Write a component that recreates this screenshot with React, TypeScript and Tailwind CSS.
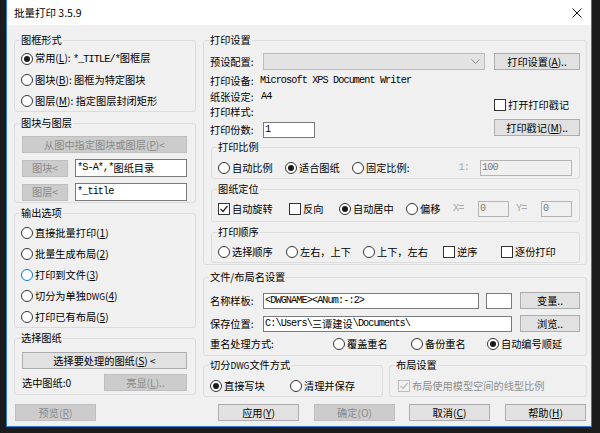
import React from "react";

const CJK = "font-['Noto_Sans_CJK_SC',sans-serif]";
const MONO = "font-['Liberation_Mono',monospace] tracking-[-0.9px]";

function U({ c }: { c: string }) {
  return <span className="underline underline-offset-[1px]">{c}</span>;
}

function M({ children }: { children: React.ReactNode }) {
  return <span className={MONO}>{children}</span>;
}

function Radio({
  checked = false,
  focus = false,
  children,
  className = "",
}: {
  checked?: boolean;
  focus?: boolean;
  children: React.ReactNode;
  className?: string;
}) {
  return (
    <div className={`flex items-center h-full shrink-0 ${className}`}>
      <span
        className={`w-[12px] h-[12px] rounded-full border ${
          focus ? "border-[#0078d7]" : "border-[#333333]"
        } bg-white flex items-center justify-center shrink-0`}
      >
        {checked && <span className="w-[6px] h-[6px] rounded-full bg-[#1a1a1a]" />}
      </span>
      <span className="ml-[2px] whitespace-nowrap">{children}</span>
    </div>
  );
}

function Check({
  checked = false,
  disabled = false,
  children,
  className = "",
}: {
  checked?: boolean;
  disabled?: boolean;
  children: React.ReactNode;
  className?: string;
}) {
  return (
    <div className={`flex items-center h-full shrink-0 ${className}`}>
      <span
        className={`w-[12px] h-[12px] border ${
          disabled ? "border-[#bcbcbc] bg-[#f0f0f0]" : "border-[#333333] bg-white"
        } flex items-center justify-center shrink-0`}
      >
        {checked && (
          <svg width="10" height="10" viewBox="0 0 10 10">
            <polyline
              points="1.5,5 4,7.5 8.5,2"
              fill="none"
              stroke={disabled ? "#bcbcbc" : "#222"}
              strokeWidth="1.2"
            />
          </svg>
        )}
      </span>
      <span className={`ml-[2px] whitespace-nowrap ${disabled ? "text-[#8d8d8d]" : ""}`}>
        {children}
      </span>
    </div>
  );
}

function Btn({
  children,
  disabled = false,
  className = "",
}: {
  children: React.ReactNode;
  disabled?: boolean;
  className?: string;
}) {
  return (
    <div
      className={`h-[17px] flex items-center justify-center border whitespace-nowrap shrink-0 ${
        disabled
          ? "bg-[#cccccc] border-[#bfbfbf] text-[#8a8a8a]"
          : "bg-[#e1e1e1] border-[#adadad] text-black"
      } ${className}`}
    >
      {children}
    </div>
  );
}

function Field({
  children,
  disabled = false,
  className = "",
}: {
  children?: React.ReactNode;
  disabled?: boolean;
  className?: string;
}) {
  return (
    <div
      className={`h-[16px] flex items-center border px-[1px] whitespace-nowrap overflow-hidden shrink-0 ${
        disabled
          ? "bg-[#f0f0f0] border-[#b4b4b4] text-[#7a7a7a]"
          : "bg-white border-[#7a7a7a] text-black"
      } ${className}`}
    >
      {children}
    </div>
  );
}

function Group({
  title,
  className = "",
  children,
}: {
  title: React.ReactNode;
  className?: string;
  children: React.ReactNode;
}) {
  return (
    <fieldset className={`border border-[#dcdcdc] rounded-[3px] min-w-0 ${className}`}>
      <legend className="ml-[5px] px-[1px] leading-[14px]">{title}</legend>
      {children}
    </fieldset>
  );
}

export default function App() {
  return (
    <div
      className={`w-[600px] h-[433px] bg-[#1c1c1c] pl-[6px] pr-[8px] pb-[6px] ${CJK} text-[10.2px] text-black`}
    >
      <div className="h-full flex flex-col border-x border-b border-[#2b7bd3] bg-[#f0f0f0]">
        {/* title bar */}
        <div className="h-[25px] bg-white flex items-center justify-between pl-[7px] pr-[9px] shrink-0">
          <span className="text-[10.5px]">批量打印 3.5.9</span>
          <svg width="10" height="10" viewBox="0 0 10 10">
            <path d="M0.5 0.5 L9.5 9.5 M9.5 0.5 L0.5 9.5" stroke="#111" strokeWidth="1" />
          </svg>
        </div>

        <div className="flex gap-[7px] pl-[7px] pt-[8px]">
          {/* LEFT COLUMN */}
          <div className="w-[182px] flex flex-col shrink-0">
            <Group title="图框形式">
              <div className="pt-[1px] pl-[6px] flex flex-col">
                <div className="h-[21px]">
                  <Radio checked>
                    常用(<U c="L" />): <M>*_TITLE/*</M>图框层
                  </Radio>
                </div>
                <div className="h-[21px]">
                  <Radio>
                    图块(<U c="B" />): 图框为特定图块
                  </Radio>
                </div>
                <div className="h-[21px]">
                  <Radio>
                    图层(<U c="M" />): 指定图层封闭矩形
                  </Radio>
                </div>
              </div>
            </Group>

            <Group title="图块与图层" className="mt-[4px]">
              <div className="pt-[6px] pl-[7px] pr-[8px] pb-[1px] flex flex-col">
                <Btn disabled>
                  从图中指定图块或图层(<U c="P" />)&lt;
                </Btn>
                <div className="mt-[6px] h-[18px] flex items-center">
                  <Btn disabled className="w-[46px]">
                    图块&lt;
                  </Btn>
                  <Field className="ml-[7px] flex-1 h-[18px]">
                    <M>*S-A*,*</M>图纸目录
                  </Field>
                </div>
                <div className="mt-[6px] h-[18px] flex items-center">
                  <Btn disabled className="w-[46px]">
                    图层&lt;
                  </Btn>
                  <Field className="ml-[7px] flex-1 h-[18px]">
                    <M>*_title</M>
                  </Field>
                </div>
              </div>
            </Group>

            <Group title="输出选项" className="mt-[3px]">
              <div className="pt-[2px] pl-[6px] flex flex-col">
                <div className="h-[21px]">
                  <Radio>
                    直接批量打印(<U c="1" />)
                  </Radio>
                </div>
                <div className="h-[21px]">
                  <Radio>
                    批量生成布局(<U c="2" />)
                  </Radio>
                </div>
                <div className="h-[21px]">
                  <Radio focus>
                    打印到文件(<U c="3" />)
                  </Radio>
                </div>
                <div className="h-[21px]">
                  <Radio>
                    切分为单独<span className="text-[8.5px]">DWG</span>(<U c="4" />)
                  </Radio>
                </div>
                <div className="h-[21px]">
                  <Radio>
                    打印已有布局(<U c="5" />)
                  </Radio>
                </div>
              </div>
            </Group>

            <Group title="选择图纸" className="mt-[3px]">
              <div className="pt-[7px] pl-[7px] pr-[8px] pb-[3px] flex flex-col">
                <Btn>
                  选择要处理的图纸(<U c="S" />) &lt;
                </Btn>
                <div className="mt-[5px] h-[17px] flex items-center">
                  <span>选中图纸:0</span>
                  <Btn disabled className="ml-auto w-[83px]">
                    亮显(<U c="L" />)..
                  </Btn>
                </div>
              </div>
            </Group>

            <Btn disabled className="mt-[9px] ml-[1px] w-[81px]">
              预览(<U c="R" />)
            </Btn>
          </div>

          {/* RIGHT COLUMN */}
          <div className="w-[384px] flex flex-col shrink-0">
            <Group title="打印设置">
              <div className="pt-[6px] pl-[6px] pr-[6px] pb-[1px] flex flex-col">
                <div className="h-[17px] flex items-center">
                  <span className="w-[53px] shrink-0">预设配置:</span>
                  <div className="w-[222px] h-[17px] border border-[#bcbcbc] bg-[#e3e3e3] flex items-center justify-end pr-[4px]">
                    <svg width="9" height="5" viewBox="0 0 9 5">
                      <polyline points="0.5,0.5 4.5,4.5 8.5,0.5" fill="none" stroke="#8a8a8a" strokeWidth="1" />
                    </svg>
                  </div>
                  <Btn className="ml-auto w-[86px]">
                    打印设置(<U c="A" />)..
                  </Btn>
                </div>

                <div className="mt-[3px] flex">
                  <div className="flex-1 flex flex-col">
                    <div className="h-[16px] flex items-center">
                      <span className="w-[50px] shrink-0">打印设备:</span>
                      <M>Microsoft XPS Document Writer</M>
                    </div>
                    <div className="h-[15px] flex items-center">
                      <span className="w-[51px] shrink-0">纸张设定:</span>
                      <M>A4</M>
                    </div>
                    <div className="h-[16px] flex items-center">
                      <span>打印样式:</span>
                    </div>
                    <div className="mt-[2px] h-[16px] flex items-center">
                      <span className="w-[53px] shrink-0">打印份数:</span>
                      <Field className="w-[52px]">
                        <M>1</M>
                      </Field>
                    </div>
                  </div>
                  <div className="w-[86px] flex flex-col">
                    <div className="mt-[25px] h-[14px]">
                      <Check>打开打印戳记</Check>
                    </div>
                    <Btn className="mt-[7px] w-[86px]">
                      打印戳记(<U c="M" />)..
                    </Btn>
                  </div>
                </div>

                <Group title="打印比例" className="mt-[2px] ml-[1px]">
                  <div className="pt-[4px] pl-[6px] pr-[7px] h-[24px] flex items-center">
                    <Radio className="w-[67px]">自动比例</Radio>
                    <Radio checked className="w-[67px]">
                      适合图纸
                    </Radio>
                    <Radio>固定比例:</Radio>
                    <span className={`ml-auto text-[#a8a8a8] ${MONO}`}>1:</span>
                    <Field disabled className="ml-[11px] w-[92px]">
                      <M>100</M>
                    </Field>
                  </div>
                </Group>

                <Group title="图纸定位" className="mt-[3px] ml-[1px]">
                  <div className="pt-[2px] pb-[1px] pl-[6px] pr-[7px] h-[25px] flex items-center">
                    <Check checked className="w-[71px]">
                      自动旋转
                    </Check>
                    <Check className="w-[50px]">反向</Check>
                    <Radio checked className="w-[67px]">
                      自动居中
                    </Radio>
                    <Radio className="w-[47px]">偏移</Radio>
                    <span className={`w-[25px] text-[#a8a8a8] ${MONO}`}>X=</span>
                    <Field disabled className="w-[31px]">
                      <M>0</M>
                    </Field>
                    <span className={`ml-[7px] w-[25px] text-[#a8a8a8] ${MONO}`}>Y=</span>
                    <Field disabled className="w-[31px]">
                      <M>0</M>
                    </Field>
                  </div>
                </Group>

                <Group title="打印顺序" className="mt-[3px] ml-[1px]">
                  <div className="pt-[3px] pl-[6px] pr-[7px] h-[23px] flex items-center">
                    <Radio className="w-[68px]">选择顺序</Radio>
                    <Radio className="w-[77px]">左右，上下</Radio>
                    <Radio className="w-[80px]">上下，左右</Radio>
                    <Check className="w-[58px]">逆序</Check>
                    <Check>逐份打印</Check>
                  </div>
                </Group>
              </div>
            </Group>

            <Group title="文件/布局名设置" className="mt-[5px]">
              <div className="pt-[8px] pl-[6px] pr-[6px] pb-[2px] flex flex-col">
                <div className="h-[17px] flex items-center">
                  <span className="w-[53px] shrink-0">名称样板:</span>
                  <Field className="w-[216px]">
                    <M>&lt;DWGNAME&gt;&lt;ANum:-:2&gt;</M>
                  </Field>
                  <Field className="ml-[7px] w-[26px]" />
                  <Btn className="ml-auto w-[60px]">变量..</Btn>
                </div>
                <div className="mt-[6px] h-[17px] flex items-center">
                  <span className="w-[53px] shrink-0">保存位置:</span>
                  <Field className="w-[249px]">
                    <M>C:\Users\</M>三谭建设<M>\Documents\</M>
                  </Field>
                  <Btn className="ml-auto w-[60px]">浏览..</Btn>
                </div>
                <div className="mt-[3px] h-[18px] flex items-center">
                  <span className="w-[123px] shrink-0">重名处理方式:</span>
                  <Radio className="w-[78px]">覆盖重名</Radio>
                  <Radio className="w-[76px]">备份重名</Radio>
                  <Radio checked>自动编号顺延</Radio>
                </div>
              </div>
            </Group>

            <div className="mt-[2px] flex">
              <Group title={<>切分<span className="text-[8.5px]">DWG</span>文件方式</>} className="w-[180px] shrink-0">
                <div className="pt-[4px] pl-[6px] h-[24px] flex items-center">
                  <Radio checked className="w-[80px]">
                    直接写块
                  </Radio>
                  <Radio>清理并保存</Radio>
                </div>
              </Group>
              <Group title="布局设置" className="ml-[6px] flex-1">
                <div className="pt-[4px] pl-[8px] h-[24px] flex items-center">
                  <Check checked disabled>
                    布局使用模型空间的线型比例
                  </Check>
                </div>
              </Group>
            </div>

            <div className="mt-[7px] flex">
              <Btn className="ml-[15px] w-[81px]">
                应用(<U c="Y" />)
              </Btn>
              <Btn disabled className="ml-[15px] w-[81px]">
                确定(O)
              </Btn>
              <Btn className="ml-[14px] w-[81px]">
                取消(<U c="C" />)
              </Btn>
              <Btn className="ml-[15px] w-[81px]">
                帮助(<U c="H" />)
              </Btn>
            </div>
          </div>
        </div>
      </div>
    </div>
  );
}
